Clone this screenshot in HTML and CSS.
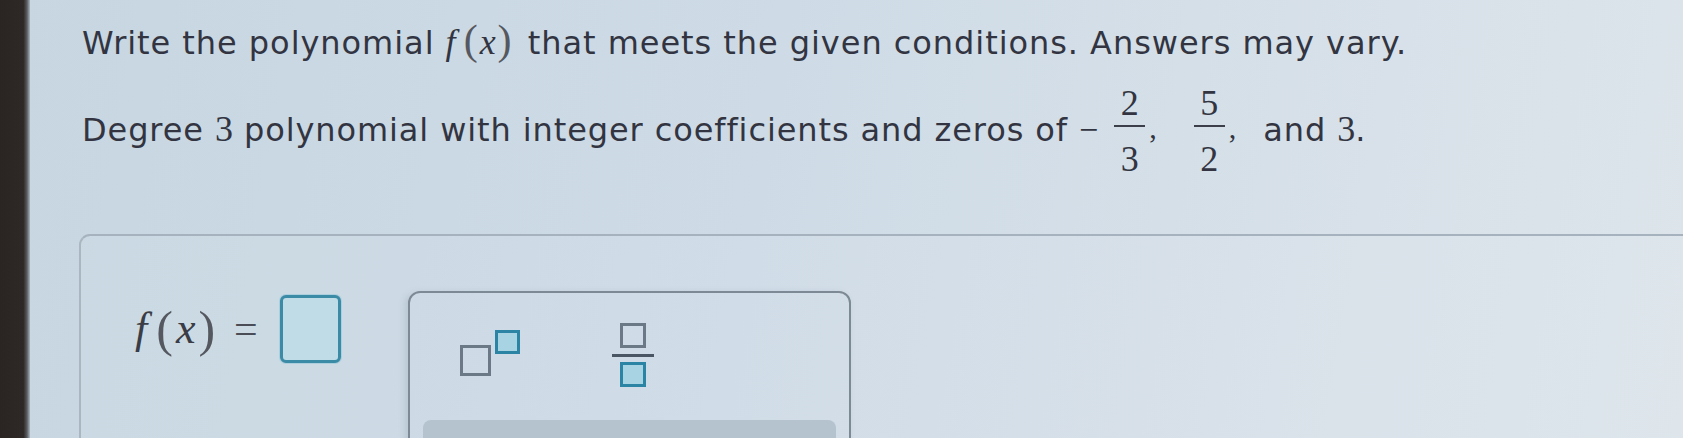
FILE: index.html
```html
<!DOCTYPE html>
<html lang="en">
<head>
<meta charset="utf-8">
<title>Polynomial question</title>
<link rel="stylesheet" href="styles.css">
</head>
<body>
<div class="bezel"></div>
<main class="screen">
  <p class="prompt line1">Write the polynomial <span class="math"><i class="mi">f</i><span class="paren">(</span><i class="mi">x</i><span class="paren">)</span></span> that meets the given conditions. Answers may vary.</p>
  <p class="prompt line2">Degree <span class="num">3</span> polynomial with integer coefficients and zeros of <span class="math"><span class="minus">−</span><span class="frac"><span class="numer">2</span><span class="denom">3</span></span><span class="comma first">,</span> <span class="frac"><span class="numer">5</span><span class="denom">2</span></span><span class="comma last">,</span></span> and <span class="num">3</span>.</p>
  <section class="answer">
    <div class="equation">
      <span class="eq-text"><i class="mi">f</i><span class="paren">(</span><i class="mi">x</i><span class="paren">)</span><span class="eq">=</span></span>
      <span class="input"></span>
    </div>
    <div class="toolbar">
      <div class="tools">
        <span class="icon sup"><span class="sq base"></span><span class="sq small active"></span></span>
        <span class="icon fraction"><span class="sq fsq"></span><span class="fbar"></span><span class="sq fsq active"></span></span>
      </div>
      <div class="tool-btn"></div>
    </div>
  </section>
</main>
</body>
</html>
```

FILE: styles.css
```css
html, body {
  margin: 0;
  height: 438px;
  overflow: hidden;
}
body {
  display: flex;
  background: linear-gradient(100deg, #c7d6e1 0%, #cedbe6 45%, #d8e1e9 80%, #dde5eb 100%);
  color: #323541;
  font-family: "DejaVu Sans", Verdana, sans-serif;
}
.bezel {
  width: 30px;
  flex: none;
  background: linear-gradient(to right, #2a2422 0%, #2e2826 78%, #5a5c60 90%, #aab6bf 100%);
}
.screen {
  flex: 1;
  padding-left: 49px;
  min-width: 0;
}
.prompt {
  margin: 0;
  padding-left: 3px;
  font-size: 32px;
  line-height: 40px;
  letter-spacing: 0.9px;
  white-space: nowrap;
}
.line1 {
  height: 57px;
  padding-top: 23px;
  letter-spacing: 0.95px;
}
.line2 {
  height: 125px;
  padding-top: 29px;
}
.math {
  font-family: "Liberation Serif", "Times New Roman", serif;
  letter-spacing: 0;
  line-height: 0;
}
.mi {
  font-style: italic;
  font-size: 36px;
}
.paren {
  font-size: 42px;
  color: #55585f;
  padding: 0 2px;
}
.line1 .math .mi:first-child {
  margin-right: 6px;
}
.line1 .math {
  margin-right: 3px;
}
.num {
  font-family: "Liberation Serif", "Times New Roman", serif;
  font-size: 36px;
  letter-spacing: 0;
}
.minus {
  font-size: 34px;
  margin-right: 12px;
}
.frac {
  display: inline-flex;
  flex-direction: column;
  align-items: stretch;
  vertical-align: 26px;
  margin: -40px 4px;
  font-size: 36px;
  line-height: 26px;
  text-align: center;
  width: 31px;
}
.numer {
  display: block;
  padding-bottom: 9px;
  border-bottom: 2px solid #3c3f4a;
}
.denom {
  display: block;
  padding-top: 19px;
}
.comma {
  font-size: 30px;
  position: relative;
  top: -3px;
}
.comma.first {
  margin-right: 25px;
}
.comma.last {
  margin-right: 16px;
}
.answer {
  display: flex;
  align-items: flex-start;
  height: 260px;
  border-top: 2px solid #a6b3be;
  border-left: 2px solid #aab6c0;
  border-top-left-radius: 11px;
  background: rgba(255, 255, 255, 0.05);
}
.equation {
  display: flex;
  align-items: center;
  margin-top: 59px;
  padding-left: 54px;
  height: 68px;
}
.eq-text {
  font-family: "Liberation Serif", "Times New Roman", serif;
  font-size: 42px;
  line-height: 48px;
  color: #3a3d46;
  display: flex;
  align-items: center;
}
.eq-text .mi {
  font-size: 44px;
}
.eq-text .mi:first-child {
  margin-right: 6px;
}
.eq-text .paren {
  font-size: 50px;
  padding: 0 3px;
}
.eq {
  margin-left: 16px;
  font-size: 42px;
  color: #4a4d55;
}
.input {
  width: 55px;
  height: 62px;
  margin-left: 22px;
  border: 3px solid #3b8aa6;
  border-radius: 6px;
  background: #bfdce7;
  box-shadow: 0 0 0 1px rgba(140, 195, 215, 0.5);
}
.toolbar {
  width: 439px;
  height: 200px;
  margin-top: 55px;
  margin-left: 67px;
  border: 2px solid #7d8994;
  border-radius: 12px;
  display: flex;
  flex-direction: column;
  box-shadow: -3px 2px 6px rgba(120, 140, 155, 0.25);
}
.tools {
  display: flex;
  align-items: flex-start;
  padding: 30px 0 0 50px;
  gap: 92px;
  height: 97px;
}
.icon {
  display: inline-flex;
}
.sq {
  display: block;
  box-sizing: border-box;
  border: 3px solid #6b7886;
  background: transparent;
}
.sq.active {
  border-color: #2b84a3;
  background: #a8d3e3;
}
.sup {
  align-items: flex-start;
  margin-top: 7px;
}
.sup .base {
  width: 31px;
  height: 31px;
  margin-top: 15px;
}
.sup .small {
  width: 25px;
  height: 24px;
  margin-left: 4px;
}
.fraction {
  flex-direction: column;
  align-items: center;
  width: 42px;
}
.fsq {
  width: 26px;
  height: 25px;
}
.fbar {
  display: block;
  width: 42px;
  height: 3px;
  margin: 6px 0 5px;
  background: #4b5664;
}
.tool-btn {
  margin: 0 13px;
  flex: 1;
  background: #b5c3ce;
  border-radius: 8px 8px 0 0;
}
```
